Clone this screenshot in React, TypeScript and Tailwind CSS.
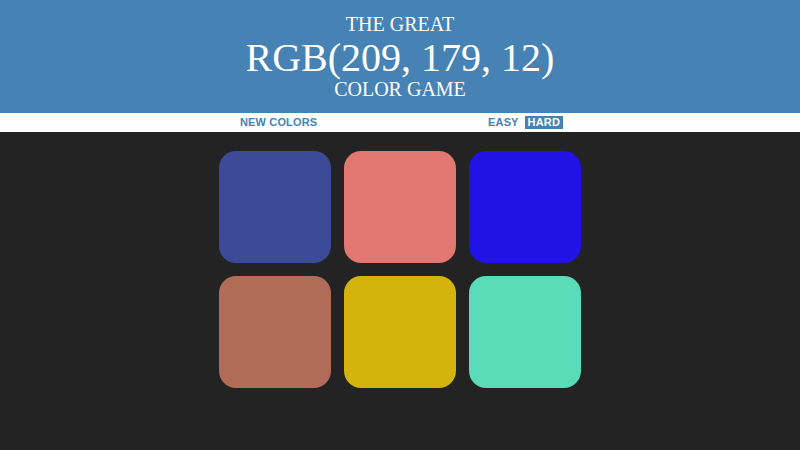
export default function App() {
  const squares = [
    "#3c4a98",
    "#e27670",
    "#2112e6",
    "#b06c57",
    "#d3b30c",
    "#5adcb9",
  ];
  return (
    <div className="w-[800px] h-[450px] bg-[#232323] overflow-hidden">
      <header
        className="h-[113px] bg-[#4682b4] text-white uppercase flex flex-col items-center pt-[12px]"
        style={{ fontFamily: '"Liberation Serif", serif' }}
      >
        <div className="text-[20px] leading-[24px]">The Great</div>
        <div className="text-[40px] leading-[44px]">RGB(209, 179, 12)</div>
        <div className="text-[20px] leading-[24px] -mt-[3px]">Color Game</div>
      </header>
      <div
        className="h-[19px] bg-white flex items-center justify-center text-[11px] font-bold tracking-[0.15px]"
        style={{ fontFamily: '"Liberation Sans", sans-serif' }}
      >
        <div className="w-[323px] ml-[3px] flex items-center">
          <button className="uppercase text-[#4682b4]">New Colors</button>
          <span className="flex-1" />
          <button className="uppercase px-[4px] text-[#4682b4] h-[13px] leading-[13px]">Easy</button>
          <button className="uppercase ml-[2px] px-[3px] h-[13px] leading-[13px] bg-[#4682b4] text-white">Hard</button>
        </div>
      </div>
      <div className="flex justify-center pt-[19px]">
        <div className="grid grid-cols-[112px_112px_112px] gap-[13px]">
          {squares.map((c) => (
            <div key={c} className="w-[112px] h-[112px] rounded-[17px]" style={{ backgroundColor: c }} />
          ))}
        </div>
      </div>
    </div>
  );
}
